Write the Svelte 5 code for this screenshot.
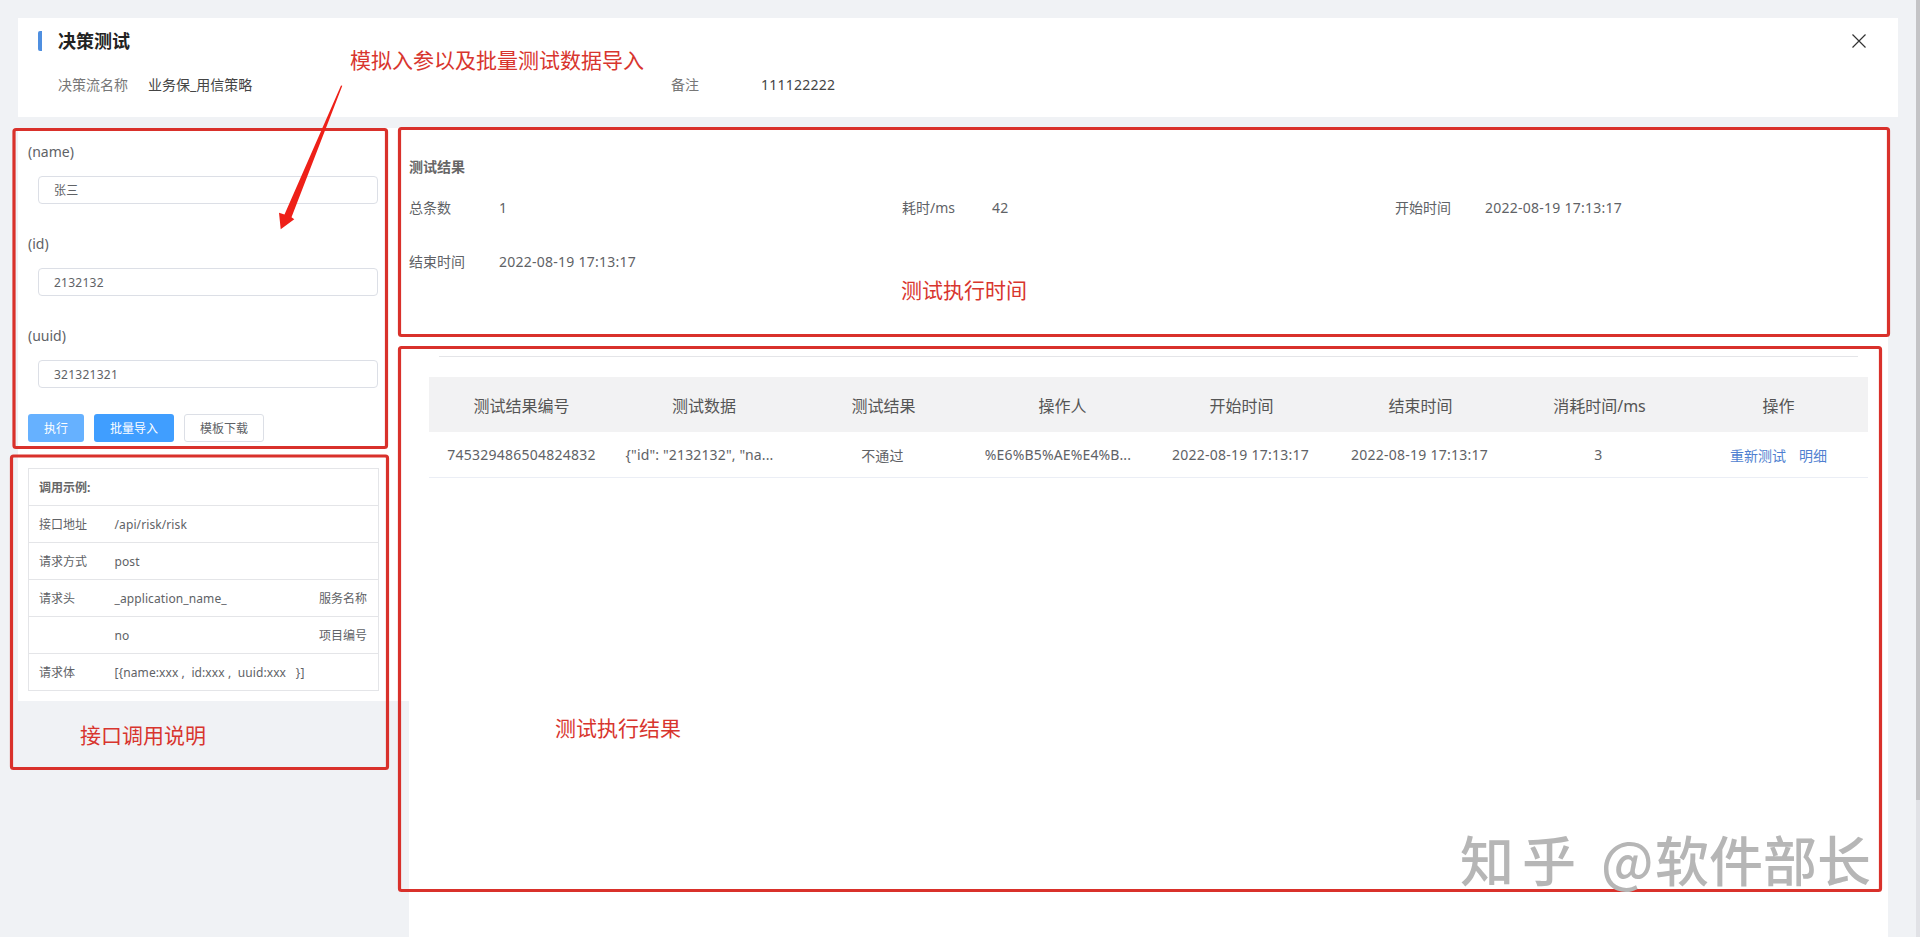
<script>
  const params = [
    { label: '(name)', value: '张三' },
    { label: '(id)', value: '2132132' },
    { label: '(uuid)', value: '321321321' }
  ];
  const apiRows = [
    { k: '接口地址', v: '/api/risk/risk', r: '' },
    { k: '请求方式', v: 'post', r: '' },
    { k: '请求头', v: '_application_name_', r: '服务名称' },
    { k: '', v: 'no', r: '项目编号' },
    { k: '请求体', v: '[{name:xxx ,  id:xxx ,  uuid:xxx   }]', r: '' }
  ];
  const heads = ['测试结果编号', '测试数据', '测试结果', '操作人', '开始时间', '结束时间', '消耗时间/ms', '操作'];
  const cells = [
    { t: '745329486504824832', trunc: false },
    { t: '{"id": "2132132", "na...', trunc: true },
    { t: '不通过', trunc: false },
    { t: '%E6%B5%AE%E4%B...', trunc: true },
    { t: '2022-08-19 17:13:17', trunc: false },
    { t: '2022-08-19 17:13:17', trunc: false },
    { t: '3', trunc: false }
  ];
</script>

<div class="page">
  <div class="main">
    <header class="head">
      <div class="title-row">
        <h1 class="title">决策测试</h1>
        <svg class="close" viewBox="0 0 14 14" width="14" height="14" aria-label="close">
          <path d="M.5.5l13 13M13.5.5l-13 13" fill="none" stroke="#333" stroke-width="1.2" />
        </svg>
      </div>
      <div class="meta">
        <div class="meta-item">
          <span class="meta-label">决策流名称</span><span class="meta-value">业务保_用信策略</span>
        </div>
        <div class="meta-item">
          <span class="meta-label">备注</span><span class="meta-value num">111122222</span>
        </div>
      </div>
    </header>

    <div class="body">
      <aside class="left">
        <form class="params">
          {#each params as p (p.label)}
            <label class="field">
              <span class="field-label">{p.label}</span>
              <input class="field-input" value={p.value} readonly />
            </label>
          {/each}
          <div class="actions">
            <button type="button" class="btn exec">执行</button>
            <button type="button" class="btn batch">批量导入</button>
            <button type="button" class="btn plain">模板下载</button>
          </div>
        </form>
        <table class="api">
          <colgroup>
            <col class="api-c1" /><col class="api-c2" /><col class="api-c3" />
          </colgroup>
          <tbody>
            <tr><th colspan="3">调用示例:</th></tr>
            {#each apiRows as row (row.v)}
              <tr>
                <td class="api-k">{row.k}</td>
                <td class="api-v">{row.v}</td>
                <td class="api-r">{row.r}</td>
              </tr>
            {/each}
          </tbody>
        </table>
      </aside>

      <section class="right">
        <div class="summary">
          <div class="summary-title">测试结果</div>
          <div class="summary-grid">
            <div class="stat"><span class="stat-k">总条数</span><span class="stat-v">1</span></div>
            <div class="stat"><span class="stat-k">耗时/ms</span><span class="stat-v">42</span></div>
            <div class="stat"><span class="stat-k">开始时间</span><span class="stat-v">2022-08-19 17:13:17</span></div>
            <div class="stat"><span class="stat-k">结束时间</span><span class="stat-v">2022-08-19 17:13:17</span></div>
          </div>
        </div>
        <div class="rule"></div>
        <table class="results">
          <colgroup>
            <col class="c1" /><col class="c2" />
            <col class="cn" /><col class="cn" /><col class="cn" /><col class="cn" /><col class="cn" /><col class="cn" />
          </colgroup>
          <thead>
            <tr>
              {#each heads as h (h)}<th>{h}</th>{/each}
            </tr>
          </thead>
          <tbody>
            <tr>
              {#each cells as c, i (i)}<td class="val" class:trunc={c.trunc}>{c.t}</td>{/each}
              <td><span class="link">重新测试</span><span class="link second">明细</span></td>
            </tr>
          </tbody>
        </table>
      </section>
    </div>
  </div>
  <div class="scroll"><div class="thumb"></div></div>

  <svg class="marks" width="1920" height="937" viewBox="0 0 1920 937" aria-hidden="true">
    <g fill="none" stroke="#d9312b" stroke-width="3.2">
      <rect x="14" y="129.5" width="372.5" height="318" rx="2" />
      <rect x="11.5" y="456" width="376" height="312.5" rx="2" />
      <rect x="399.5" y="128.5" width="1489" height="207" rx="2" />
      <rect x="399.5" y="347.5" width="1481" height="543" rx="2" />
    </g>
    <path d="M341 85.5l1.3.2-50.8 131.6 2.8 2-13.6 10-1.7-16.6 5.5 1.8z" fill="#ee2018" />
  </svg>
  <span class="note n1">模拟入参以及批量测试数据导入</span>
  <span class="note n2">接口调用说明</span>
  <span class="note n3">测试执行时间</span>
  <span class="note n4">测试执行结果</span>
  <div class="watermark"><span class="wm-a">知乎</span><span class="wm-b">@</span><span class="wm-c">软件部长</span></div>
</div>

<style>
  :global(body) {
    margin: 0;
    background: #f0f2f5;
  }
  .page {
    position: relative;
    display: flex;
    width: 1920px;
    height: 937px;
    overflow: hidden;
    background: #f0f2f5;
    font-family: "Noto Sans", "Noto Sans CJK SC", sans-serif;
    font-size: 14px;
    color: #606266;
  }
  .main {
    flex: 1;
    min-width: 0;
    padding: 18px 18px 0;
  }
  .scroll {
    width: 4px;
    background: #e1e2e6;
  }
  .thumb {
    height: 800px;
    background: #c4c4c6;
  }
  .head {
    box-sizing: border-box;
    height: 99px;
    padding: 12px 32px 0 20px;
    background: #fff;
  }
  .title-row {
    display: flex;
    align-items: center;
    justify-content: space-between;
    height: 22px;
  }
  .title {
    margin: 0;
    padding-left: 16px;
    border-left: 4px solid #4f8fe0;
    border-radius: 2px;
    font-size: 18px;
    line-height: 20px;
    font-weight: 700;
    color: #222;
  }
  .close {
    display: block;
  }
  .meta {
    display: flex;
    margin-top: 23px;
    padding-left: 20px;
    line-height: 20px;
  }
  .meta-item {
    display: flex;
    width: 613px;
  }
  .meta-label {
    width: 90px;
    color: #777;
  }
  .meta-value {
    color: #444;
  }
  .body {
    display: flex;
    align-items: flex-start;
    width: 1870px;
    height: 809px;
    margin-top: 11px;
  }
  .left {
    box-sizing: border-box;
    width: 391px;
    height: 573px;
    padding: 14px 0 0 10px;
    background: #fff;
  }
  .field {
    display: block;
    margin-bottom: 30px;
  }
  .field-label {
    display: block;
    line-height: 20px;
    margin-bottom: 14px;
  }
  .field-input {
    display: block;
    box-sizing: border-box;
    width: 340px;
    height: 28px;
    margin-left: 10px;
    padding: 0 15px;
    border: 1px solid #dcdfe6;
    border-radius: 4px;
    outline: none;
    background: #fff;
    font: 12px "Noto Sans", "Noto Sans CJK SC", sans-serif;
    letter-spacing: 0.25px;
    color: #606266;
  }
  .actions {
    display: flex;
    gap: 10px;
    margin-top: -4px;
  }
  .btn {
    box-sizing: border-box;
    width: 80px;
    height: 28px;
    padding: 0;
    border: 1px solid transparent;
    border-radius: 3px;
    font: 12px "Noto Sans", "Noto Sans CJK SC", sans-serif;
    color: #fff;
  }
  .exec {
    width: 56px;
    background: #66b1ff;
  }
  .batch {
    background: #409eff;
  }
  .plain {
    background: #fff;
    border-color: #dcdfe6;
    color: #606266;
  }
  .api {
    width: 350px;
    margin-top: 26px;
    border-collapse: collapse;
    font-size: 12px;
    table-layout: fixed;
  }
  .api-c1 {
    width: 85px;
  }
  .api-c2 {
    width: 205px;
  }
  .api-c3 {
    width: 60px;
  }
  .api tr {
    height: 37px;
  }
  .api th,
  .api td {
    padding: 0 10px;
    border-top: 1px solid #e4e5e8;
    border-bottom: 1px solid #e4e5e8;
    white-space: pre;
  }
  .api th {
    border-left: 1px solid #e4e5e8;
    border-right: 1px solid #e4e5e8;
    text-align: left;
    font-weight: 700;
    color: #666;
  }
  .api-k {
    border-left: 1px solid #e4e5e8;
  }
  .api .api-v {
    padding: 0 0 0 1px;
    letter-spacing: 0.1px;
  }
  .api .api-r {
    padding: 0 11px 0 0;
    border-right: 1px solid #e4e5e8;
    text-align: right;
  }
  .right {
    flex: 1;
    min-width: 0;
    height: 100%;
    background: #fff;
  }
  .summary {
    box-sizing: border-box;
    height: 228px;
    padding-top: 29px;
  }
  .summary-title {
    line-height: 20px;
    margin-bottom: 4px;
    font-weight: 700;
    color: #666;
  }
  .summary-grid {
    display: grid;
    grid-template-columns: repeat(3, 493px);
    grid-auto-rows: 54px;
    align-items: center;
  }
  .stat {
    display: flex;
    line-height: 20px;
  }
  .stat-k {
    width: 90px;
  }
  .stat-v,
  .num,
  .val {
    letter-spacing: 0.25px;
  }
  .rule {
    height: 1px;
    margin: 0 30px;
    background: #e4e5e8;
  }
  .results {
    width: 1439px;
    margin: 20px 0 0 20px;
    border-collapse: collapse;
    table-layout: fixed;
    text-align: center;
  }
  .c1 {
    width: 185px;
  }
  .c2 {
    width: 180px;
  }
  .cn {
    width: 179px;
  }
  .results th {
    height: 55px;
    padding: 0;
    background: #f2f2f3;
    font-size: 16px;
    font-weight: 400;
    color: #555;
  }
  .results td {
    height: 45px;
    padding: 0;
    border-bottom: 1px solid #ebeef5;
    white-space: nowrap;
  }
  .results .val {
    padding-right: 2px;
  }
  .results .val:first-child {
    padding-right: 0;
  }
  .results .trunc {
    padding-right: 9px;
    letter-spacing: 0.15px;
  }
  .link {
    color: #4f7fd0;
  }
  .second {
    margin-left: 13px;
  }
  .marks {
    position: absolute;
    left: 0;
    top: 0;
    pointer-events: none;
  }
  .note {
    position: absolute;
    font-size: 21px;
    line-height: 30px;
    color: #d8352e;
    white-space: nowrap;
  }
  .n1 {
    left: 350px;
    top: 45px;
  }
  .n2 {
    left: 80px;
    top: 720px;
  }
  .n3 {
    left: 901px;
    top: 275px;
  }
  .n4 {
    left: 555px;
    top: 713px;
  }
  .watermark {
    position: absolute;
    left: 1460px;
    top: 820px;
    display: flex;
    align-items: center;
    font-family: "Noto Sans CJK SC", sans-serif;
    font-size: 54px;
    font-weight: 500;
    line-height: 78px;
    color: #b6b6b6;
    white-space: nowrap;
  }
  .wm-a {
    width: 141px;
    letter-spacing: 8px;
  }
  .wm-b {
    width: 54px;
  }
</style>
